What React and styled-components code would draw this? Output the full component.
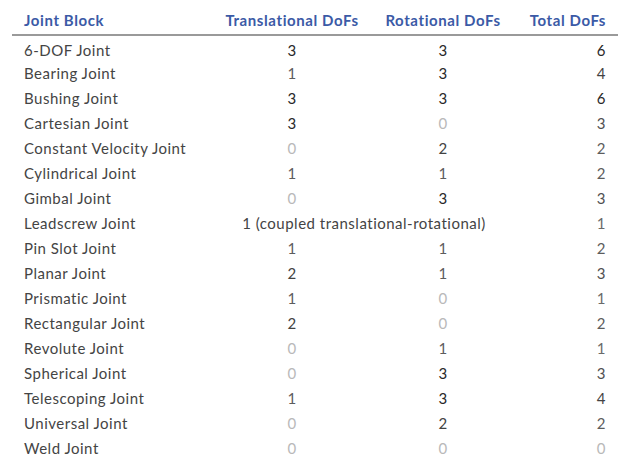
import React from "react";
import styled, { createGlobalStyle } from "styled-components";

const GlobalStyle = createGlobalStyle`
  html, body {
    margin: 0;
    padding: 0;
    background: #ffffff;
  }
  body {
    font-family: Lato, "Open Sans", sans-serif;
  }
`;

const rows = [
  ["6-DOF Joint", 3, 3, 6],
  ["Bearing Joint", 1, 3, 4],
  ["Bushing Joint", 3, 3, 6],
  ["Cartesian Joint", 3, 0, 3],
  ["Constant Velocity Joint", 0, 2, 2],
  ["Cylindrical Joint", 1, 1, 2],
  ["Gimbal Joint", 0, 3, 3],
  ["Leadscrew Joint", "1 (coupled translational-rotational)", null, 1],
  ["Pin Slot Joint", 1, 1, 2],
  ["Planar Joint", 2, 1, 3],
  ["Prismatic Joint", 1, 0, 1],
  ["Rectangular Joint", 2, 0, 2],
  ["Revolute Joint", 0, 1, 1],
  ["Spherical Joint", 0, 3, 3],
  ["Telescoping Joint", 1, 3, 4],
  ["Universal Joint", 0, 2, 2],
  ["Weld Joint", 0, 0, 0],
];

// shade a value by its share of the column maximum: 0 is pale, max is dark
const shade = (value, max) => {
  if (typeof value !== "number") return "#444444";
  const f = value / max;
  const lo = 185;
  const hi = 40;
  const c = Math.round(lo + (hi - lo) * (value === 0 ? 0 : 0.45 + 0.55 * f));
  return `rgb(${c}, ${c}, ${c})`;
};

const Page = styled.div`
  padding: 5px 4px 0 12px;
`;

const Table = styled.table`
  width: 606px;
  border-collapse: collapse;
  table-layout: fixed;
  font-size: 15px;
  letter-spacing: 0.5px;
`;

const Head = styled.th`
  color: #3b5aa6;
  font-weight: 700;
  font-size: 15px;
  letter-spacing: 0.6px;
  height: 29px;
  padding: 0 ${(p) => (p.$align === "right" ? "12px" : "0")} 0
    ${(p) => (p.$align === "left" ? "12px" : "0")};
  text-align: ${(p) => p.$align};
  border-bottom: 2px solid #9a9a9a;
  white-space: nowrap;
`;

const Row = styled.tr`
  height: 25px;
  &:first-child td {
    padding-top: 3px;
  }
`;

const Name = styled.td`
  color: #444444;
  padding: 0 0 0 12px;
  white-space: nowrap;
`;

const Num = styled.td`
  color: ${(p) => p.$color};
  text-align: ${(p) => p.$align};
  padding: 0 ${(p) => (p.$align === "right" ? "12px" : "0")} 0 0;
  white-space: nowrap;
`;

export default function App() {
  return (
    <Page>
      <GlobalStyle />
      <Table>
        <colgroup>
          <col style={{ width: 201 }} />
          <col style={{ width: 158 }} />
          <col style={{ width: 144 }} />
          <col style={{ width: 103 }} />
        </colgroup>
        <thead>
          <tr>
            <Head $align="left">Joint Block</Head>
            <Head $align="center">Translational DoFs</Head>
            <Head $align="center">Rotational DoFs</Head>
            <Head $align="right">Total DoFs</Head>
          </tr>
        </thead>
        <tbody>
          {rows.map(([name, t, r, total]) => (
            <Row key={name}>
              <Name>{name}</Name>
              {r === null ? (
                <Num colSpan={2} $align="center" $color="#444444">
                  {t}
                </Num>
              ) : (
                <>
                  <Num $align="center" $color={shade(t, 3)}>
                    {t}
                  </Num>
                  <Num $align="center" $color={shade(r, 3)}>
                    {r}
                  </Num>
                </>
              )}
              <Num $align="right" $color={shade(total, 6)}>
                {total}
              </Num>
            </Row>
          ))}
        </tbody>
      </Table>
    </Page>
  );
}
